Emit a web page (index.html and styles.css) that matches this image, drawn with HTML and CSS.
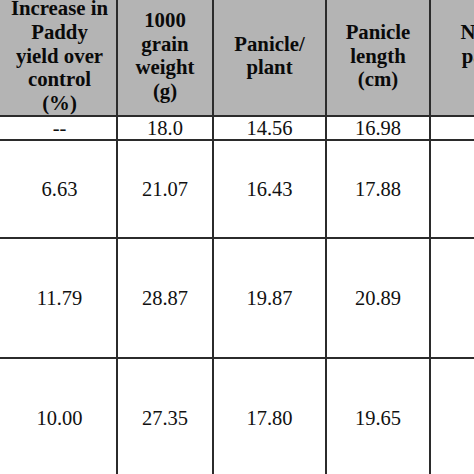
FILE: index.html
```html
<!DOCTYPE html>
<html>
<head>
<meta charset="utf-8">
<link rel="stylesheet" href="styles.css">
</head>
<body>
<table class="data">
  <colgroup>
    <col class="c1"><col class="c2"><col class="c3"><col class="c4"><col class="c5">
  </colgroup>
  <thead>
    <tr class="head">
      <th class="first">Increase in<br>Paddy<br>yield over<br>control<br>(%)</th>
      <th>1000<br>grain<br>weight<br>(g)</th>
      <th>Panicle/<br>plant</th>
      <th>Panicle<br>length<br>(cm)</th>
      <th>Number<br>panicles<br>m<sup>-2</sup></th>
    </tr>
  </thead>
  <tbody>
    <tr class="r1"><td class="first">--</td><td>18.0</td><td>14.56</td><td>16.98</td><td></td></tr>
    <tr class="r2"><td class="first">6.63</td><td>21.07</td><td>16.43</td><td>17.88</td><td></td></tr>
    <tr class="r3"><td class="first">11.79</td><td>28.87</td><td>19.87</td><td>20.89</td><td></td></tr>
    <tr class="r4"><td class="first">10.00</td><td>27.35</td><td>17.80</td><td>19.65</td><td></td></tr>
  </tbody>
</table>
</body>
</html>
```

FILE: styles.css
```css
html, body {
  margin: 0;
  padding: 0;
  background: #ffffff;
  overflow: hidden;
}

.data {
  border-collapse: collapse;
  table-layout: fixed;
  width: 565px;
  margin-top: -4px;
  font-family: "Liberation Serif", "Times New Roman", serif;
  color: #111111;
}

.c1 { width: 117px; }
.c2 { width: 96px; }
.c3 { width: 113px; }
.c4 { width: 104px; }
.c5 { width: 135px; }

.data th,
.data td {
  border: 2px solid #2b2b2b;
  text-align: center;
  vertical-align: middle;
  padding: 0;
}

.data th.first,
.data td.first {
  border-left: none;
  padding-left: 3px;
}

.data th {
  background: #b4b4b4;
  font-weight: bold;
  font-size: 20.8px;
  line-height: 23.75px;
  color: #0a0a0a;
  border-top: none;
}

.data th sup {
  font-size: 12px;
  line-height: 0;
}

.data td {
  font-size: 20.5px;
  line-height: 22px;
}

.head { height: 116px; }
.r1 { height: 24.5px; }
.r2 { height: 97.5px; }
.r3 { height: 120px; }
.r4 { height: 121px; }
```
